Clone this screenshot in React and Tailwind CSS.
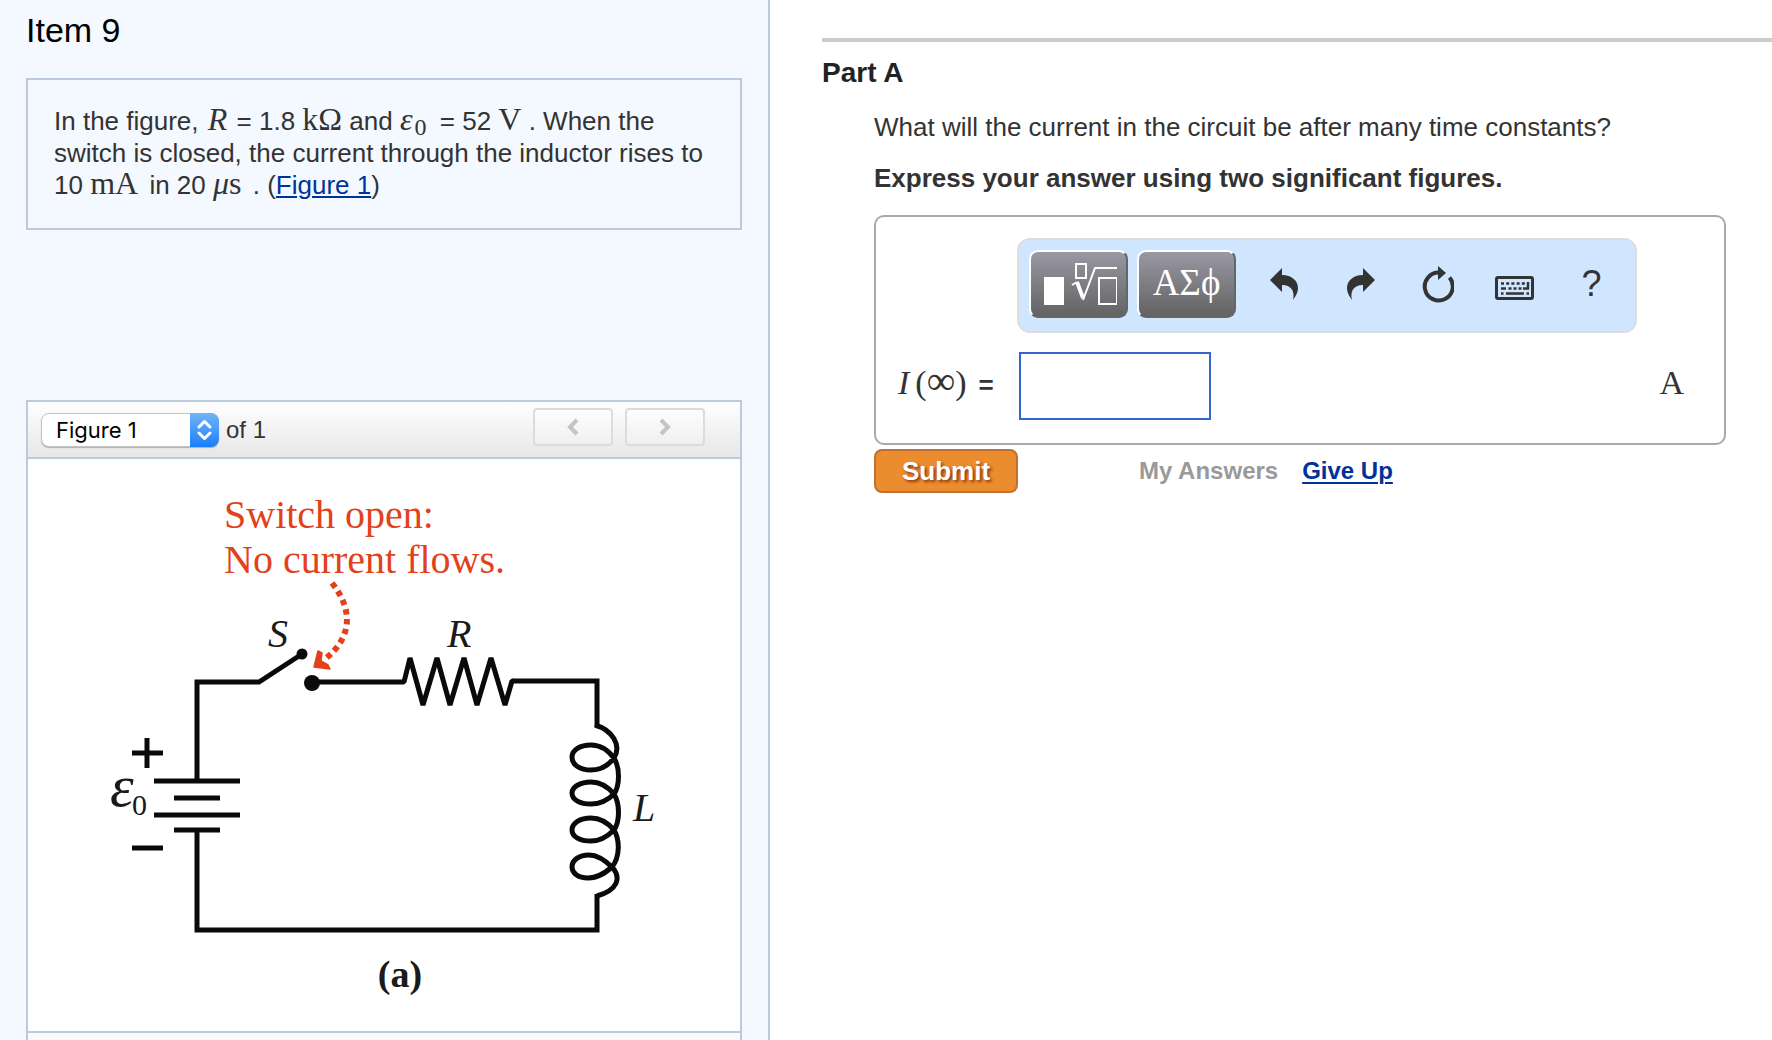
import React from "react";

const SANS = "font-['Liberation_Sans',Arial,sans-serif]";
const SERIF = "font-['Liberation_Serif','Times_New_Roman',serif]";

function MathText({ children, className = "" }) {
  return (
    <span className={`${SERIF} text-[32px] leading-4 ${className}`}>{children}</span>
  );
}

function ProblemStatement() {
  return (
    <section className="border-2 border-[#b9cbdc] px-[26px] pt-[25px] pb-[27px] text-[26px] leading-[32px] text-[#333]">
      <p>
        In the figure, <MathText className="mx-0.5 italic">R</MathText> = 1.8 <MathText>kΩ</MathText> and{" "}
        <MathText className="mr-0.5 italic">ε</MathText>
        <span className={`${SERIF} mr-1.5 align-[-5px] text-[24px] leading-4`}>0</span>
        {" "}= 52 <MathText>V</MathText> . When the switch is closed, the current through the inductor rises to 10{" "}
        <MathText className="mr-1">mA</MathText> in 20 <MathText className="italic">μ</MathText>
        <MathText className="mr-1">s</MathText> . (
        <a href="#figure-1" className="text-[#003399] underline decoration-2 underline-offset-2">
          Figure 1
        </a>
        )
      </p>
    </section>
  );
}

function NavButton({ label, d }) {
  return (
    <button
      type="button"
      aria-label={label}
      className="flex h-[38px] w-20 items-center justify-center rounded border-2 border-[#dcdcdc] bg-gradient-to-b from-[#fdfdfd] to-[#f0f0f0]"
    >
      <svg width="14" height="18" viewBox="0 0 14 18" fill="none" stroke="#c4c4c4" strokeWidth="4">
        <path d={d} />
      </svg>
    </button>
  );
}

function FigureHeader() {
  return (
    <div className="flex h-[57px] items-center border-b-2 border-[#b9cbdc] bg-gradient-to-b from-white to-[#e7e7e7] pr-[35px] pl-[13px]">
      <div className="relative">
        <select
          id="figure-select"
          aria-label="Figure"
          className="block h-[34px] w-[178px] appearance-none rounded-lg border border-[#c4c4c4] bg-white pl-[14px] font-['Inter',sans-serif] text-[22px] leading-[28px] text-black shadow-[0_1px_1px_rgba(0,0,0,0.25)]"
        >
          <option>Figure 1</option>
        </select>
        <span className="pointer-events-none absolute inset-y-0 right-0 flex w-[29px] items-center justify-center rounded-r-lg bg-gradient-to-b from-[#6fb4f9] to-[#157efb]">
          <svg width="15" height="22" viewBox="0 0 15 22" fill="none" stroke="white" strokeWidth="3" strokeLinecap="round" strokeLinejoin="round">
            <path d="M2 8 L7.5 2.5 L13 8 M2 14 L7.5 19.5 L13 14" />
          </svg>
        </span>
      </div>
      <label htmlFor="figure-select" className="ml-[7px] text-[24px] leading-none text-[#333]">
        of 1
      </label>
      <div className="mb-[5px] ml-auto flex gap-3">
        <NavButton label="Previous figure" d="M11 2 L4 9 L11 16" />
        <NavButton label="Next figure" d="M3 2 L10 9 L3 16" />
      </div>
    </div>
  );
}

const LOOPS = [
  "C608,766 600,770 591,770 C580,770 572,765 572,757 C572,750 580,745 591,745 C600,745 608,750 614,758 C620,768 620,785 614,794",
  "C608,800 600,804 591,804 C580,804 572,800 572,793 C572,787 580,782 591,782 C600,782 608,787 614,794 C620,804 620,821 614,830",
  "C608,836 600,841 591,841 C580,841 572,837 572,830 C572,823 580,818 591,818 C600,818 608,823 614,830 C620,840 620,857 612,867",
  "C605,873 598,878 588,878 C578,878 572,873 572,867 C572,860 579,855 589,855 C598,855 606,861 613,868 C621,878 618,890 597,896",
];

function CircuitDiagram() {
  return (
    <svg
      viewBox="28 459 712 572"
      className="block h-auto w-full"
      role="img"
      aria-label="Circuit with battery, open switch, resistor and inductor"
    >
      <g className={SERIF} fontSize="40" fill="#e2411b">
        <text x="224" y="528">Switch open:</text>
        <text x="224" y="573">No current flows.</text>
      </g>
      <path d="M332,583 C352,608 354,636 325,659" fill="none" stroke="#e2411b" strokeWidth="6" strokeDasharray="5.5 4.4" />
      <path d="M318,651 L314,667 L330,669 L328,665 L321,661 L322,653 Z" fill="#e2411b" stroke="#e2411b" strokeWidth="1.5" strokeLinejoin="round" />
      <g fill="none" stroke="#0a0a0a" strokeWidth="5">
        <path d="M197,782 V682 H259 L302,654" />
        <path d="M312,682 H404 L410,658 L423,705 L437,658 L450,705 L464,658 L477,705 L491,658 L505,705 L512,681 H514" strokeLinejoin="bevel" />
        <path d="M513,681 H597 V727" />
        <path d={`M595,725 C612,730 622,745 614,758 ${LOOPS.join(" ")}`} />
        <path d="M597,894 V930 H197 V830" />
        <path d="M154,781 H240 M174,798 H220 M154,815 H240 M174,830 H220" />
        <path d="M132,753 H163 M147,738 V768 M132,848 H163" />
      </g>
      <circle cx="302" cy="654" r="5.5" fill="#0a0a0a" />
      <circle cx="312" cy="683" r="8" fill="#0a0a0a" />
      <g className={SERIF} fill="#1a1a1a" fontSize="40">
        <text x="268" y="647" fontStyle="italic">S</text>
        <text x="447" y="647" fontStyle="italic">R</text>
        <text x="633" y="821" fontStyle="italic">L</text>
        <text x="110" y="806" fontStyle="italic" fontSize="60">ε</text>
        <text x="132" y="815" fontSize="30">0</text>
        <text x="400" y="987" fontSize="38" fontWeight="bold" textAnchor="middle">(a)</text>
      </g>
    </svg>
  );
}

function KeypadButton({ label, children }) {
  return (
    <button
      type="button"
      aria-label={label}
      className="flex h-[68px] w-[99px] items-center justify-center rounded-[9px] border-2 border-t-white border-r-[#666] border-b-[#666] border-l-white bg-gradient-to-b from-[#9a98a4] to-[#636363] text-white"
    >
      {children}
    </button>
  );
}

function ToolButton({ label, children }) {
  return (
    <button type="button" aria-label={label} className="flex h-[68px] w-[77px] items-center justify-center text-[#333]">
      {children}
    </button>
  );
}

function Toolbar() {
  return (
    <div className="ml-[141px] flex h-[95px] w-[620px] items-center rounded-[13px] border-2 border-[#ddd] bg-[#d0e6ff] pb-[3px] pl-2.5">
      <div className="flex gap-[9px]">
        <KeypadButton label="Templates">
          <svg width="76" height="44" viewBox="0 0 76 44" fill="none" stroke="white" strokeWidth="2">
            <rect x="3" y="15" width="20" height="28" fill="white" stroke="none" />
            <rect x="35" y="2" width="10" height="14" />
            <path d="M31 23 L36 20" />
            <path d="M36 20 L42 36" strokeWidth="4" />
            <path d="M42 38 L54 6 H77" />
            <rect x="58" y="16" width="18" height="26" />
          </svg>
        </KeypadButton>
        <KeypadButton label="Greek letters">
          <span className={`${SERIF} pb-1 text-[37px] leading-none`}>ΑΣϕ</span>
        </KeypadButton>
      </div>
      <div className="ml-[9px] flex">
        <ToolButton label="Undo">
          <svg width="28" height="32" viewBox="0 0 28 32" fill="currentColor">
            <path d="M0 12 L12 0 V7 C22 7 28 13 28 20 C28 25 25 29 23 32 C25 24 22 17 12 17 V24 Z" />
          </svg>
        </ToolButton>
        <ToolButton label="Redo">
          <svg width="28" height="32" viewBox="0 0 28 32" fill="currentColor">
            <path d="M28 12 L16 0 V7 C6 7 0 13 0 20 C0 25 3 29 5 32 C3 24 6 17 16 17 V24 Z" />
          </svg>
        </ToolButton>
        <ToolButton label="Reset">
          <svg width="32" height="37" viewBox="0 0 32 37" fill="none" stroke="currentColor" strokeWidth="4">
            <path d="M17 6.5 A14 14 0 1 0 27.5 11.5" />
            <path d="M16 0 L24 7 L16 14 Z" fill="currentColor" stroke="none" />
          </svg>
        </ToolButton>
        <ToolButton label="Keyboard">
          <svg width="40" height="24" viewBox="0 0 40 24" fill="none" stroke="currentColor" className="mt-2">
            <rect x="1.5" y="1.5" width="36" height="21" rx="1.5" strokeWidth="3" />
            <path d="M6 7.5 H30" strokeWidth="2.5" strokeDasharray="3 2.2" />
            <path d="M6 12.5 H11 M13.5 12.5 H16.5 M18.5 12.5 H21.5 M23.5 12.5 H26.5 M28 12.5 H34 M33 6 V13" strokeWidth="2.5" />
            <path d="M6 17.5 H8.5 M11 17.5 H29 M31.5 17.5 H34" strokeWidth="2.5" />
          </svg>
        </ToolButton>
        <ToolButton label="Help">
          <span className="text-[36px] leading-none">?</span>
        </ToolButton>
      </div>
    </div>
  );
}

function AnswerBox() {
  return (
    <div className="mt-[21px] rounded-[10px] border-2 border-[#aaa] pt-[21px] pb-[23px]">
      <Toolbar />
      <div className="mt-[19px] flex items-center pr-10">
        <label
          htmlFor="answer"
          className={`${SERIF} flex w-[143px] items-baseline pb-1.5 pl-[22px] text-[34px] leading-[40px] text-[#333]`}
        >
          <i className="mr-1.5">I</i>
          <span>(</span>
          <span className="text-[40px] leading-[40px]">∞</span>
          <span>)</span>
          <b className="ml-3 font-['Liberation_Sans',Arial,sans-serif] text-[26px]">=</b>
        </label>
        <input id="answer" type="text" className="h-[68px] w-[192px] border-2 border-[#3366cc] bg-white px-2 text-[26px] outline-none" />
        <span className={`${SERIF} ml-auto pb-1.5 text-[34px] leading-[40px] text-[#333]`}>A</span>
      </div>
    </div>
  );
}

export default function App() {
  return (
    <div className={`grid min-h-screen grid-cols-[770fr_1002fr] bg-white ${SANS}`}>
      <aside className="flex flex-col border-r-2 border-[#b9cbdc] bg-[#f4f8ff] pr-[26px] pl-[26px]">
        <h1 className="mt-[10px] text-[34px] leading-[40px] text-black">Item 9</h1>
        <div className="mt-7">
          <ProblemStatement />
        </div>
        <figure id="figure-1" className="mt-[170px] flex flex-1 flex-col border-x-2 border-t-2 border-[#b9cbdc] bg-white">
          <FigureHeader />
          <CircuitDiagram />
          <div className="flex-1 border-t-2 border-[#b9cbdc] bg-[#fafafa]" />
        </figure>
      </aside>
      <main className="pt-[38px] pl-[52px]">
        <hr className="border-0 border-t-4 border-[#ccc]" />
        <h2 className="mt-[15px] text-[28px] leading-[32px] font-bold text-[#222]">Part A</h2>
        <div className="mt-[22px] mr-[46px] ml-[52px] text-[26px] leading-[32px] text-[#333]">
          <p>What will the current in the circuit be after many time constants?</p>
          <p className="mt-[19px] font-bold">Express your answer using two significant figures.</p>
          <AnswerBox />
          <div className="mt-1 flex items-center text-[24px] font-bold">
            <button
              type="button"
              className="h-11 w-36 rounded-lg border-2 border-[#c07035] bg-[#eb8c2f] text-[26px] leading-none text-white [text-shadow:2px_2px_3px_#8a3a10]"
            >
              Submit
            </button>
            <span className="ml-[121px] text-[#999]">My Answers</span>
            <a href="#give-up" className="ml-6 text-[#003399] underline decoration-2 underline-offset-3">
              Give Up
            </a>
          </div>
        </div>
      </main>
    </div>
  );
}
